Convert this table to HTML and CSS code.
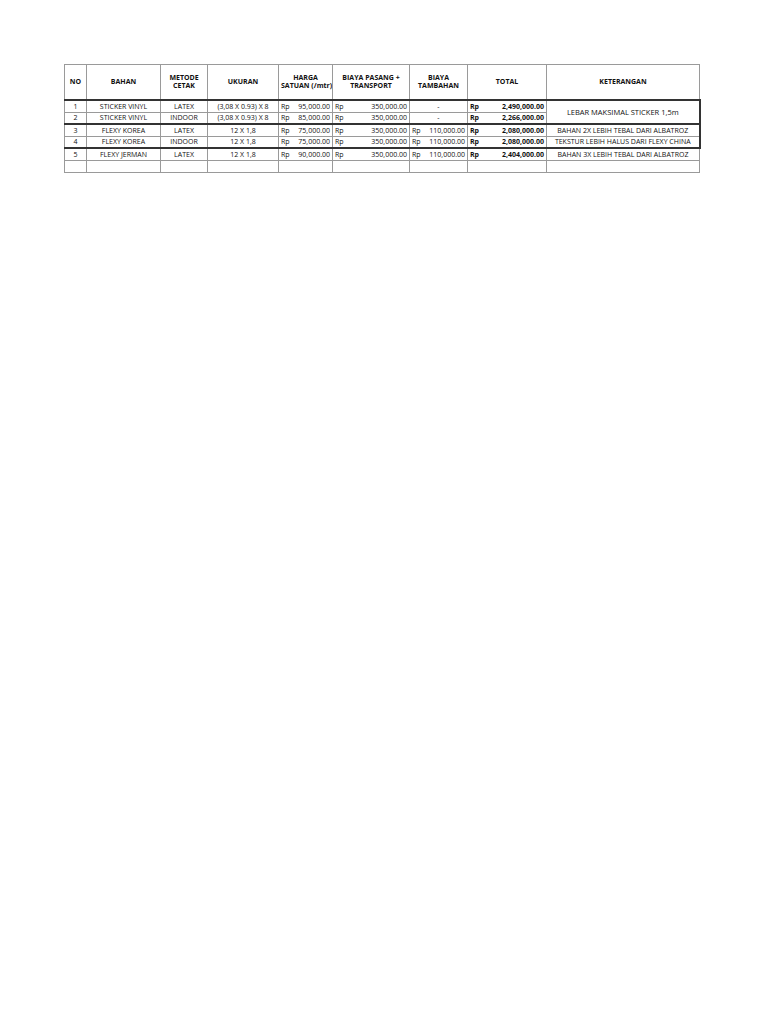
FILE: index.html
```html
<!DOCTYPE html>
<html>
<head>
<meta charset="utf-8">
<link rel="stylesheet" href="styles.css">
</head>
<body>
<table class="sheet">
  <colgroup>
    <col class="c-no"><col class="c-bahan"><col class="c-metode"><col class="c-ukuran"><col class="c-harga"><col class="c-pasang"><col class="c-tambah"><col class="c-total"><col class="c-ket">
  </colgroup>
  <thead>
    <tr class="head">
      <th>NO</th>
      <th>BAHAN</th>
      <th>METODE<br>CETAK</th>
      <th>UKURAN</th>
      <th>HARGA<br>SATUAN (/mtr)</th>
      <th>BIAYA PASANG +<br>TRANSPORT</th>
      <th>BIAYA<br>TAMBAHAN</th>
      <th>TOTAL</th>
      <th class="ket-h">KETERANGAN</th>
    </tr>
  </thead>
  <tbody>
    <tr class="row">
      <td>1</td><td>STICKER VINYL</td><td>LATEX</td><td>(3,08 X 0.93) X 8</td>
      <td><div class="acc"><span>Rp</span><span>95,000.00</span></div></td>
      <td><div class="acc"><span>Rp</span><span>350,000.00</span></div></td>
      <td>-</td>
      <td class="bold"><div class="acc"><span>Rp</span><span>2,490,000.00</span></div></td>
      <td class="ket merged" rowspan="2">LEBAR MAKSIMAL STICKER 1,5m</td>
    </tr>
    <tr class="row thick">
      <td>2</td><td>STICKER VINYL</td><td>INDOOR</td><td>(3,08 X 0.93) X 8</td>
      <td><div class="acc"><span>Rp</span><span>85,000.00</span></div></td>
      <td><div class="acc"><span>Rp</span><span>350,000.00</span></div></td>
      <td>-</td>
      <td class="bold"><div class="acc"><span>Rp</span><span>2,266,000.00</span></div></td>
    </tr>
    <tr class="row">
      <td>3</td><td>FLEXY KOREA</td><td>LATEX</td><td>12 X 1,8</td>
      <td><div class="acc"><span>Rp</span><span>75,000.00</span></div></td>
      <td><div class="acc"><span>Rp</span><span>350,000.00</span></div></td>
      <td><div class="acc"><span>Rp</span><span>110,000.00</span></div></td>
      <td class="bold"><div class="acc"><span>Rp</span><span>2,080,000.00</span></div></td>
      <td class="ket">BAHAN 2X LEBIH TEBAL DARI ALBATROZ</td>
    </tr>
    <tr class="row thick">
      <td>4</td><td>FLEXY KOREA</td><td>INDOOR</td><td>12 X 1,8</td>
      <td><div class="acc"><span>Rp</span><span>75,000.00</span></div></td>
      <td><div class="acc"><span>Rp</span><span>350,000.00</span></div></td>
      <td><div class="acc"><span>Rp</span><span>110,000.00</span></div></td>
      <td class="bold"><div class="acc"><span>Rp</span><span>2,080,000.00</span></div></td>
      <td class="ket">TEKSTUR LEBIH HALUS DARI FLEXY CHINA</td>
    </tr>
    <tr class="row">
      <td>5</td><td>FLEXY JERMAN</td><td>LATEX</td><td>12 X 1,8</td>
      <td><div class="acc"><span>Rp</span><span>90,000.00</span></div></td>
      <td><div class="acc"><span>Rp</span><span>350,000.00</span></div></td>
      <td><div class="acc"><span>Rp</span><span>110,000.00</span></div></td>
      <td class="bold"><div class="acc"><span>Rp</span><span>2,404,000.00</span></div></td>
      <td>BAHAN 3X LEBIH TEBAL DARI ALBATROZ</td>
    </tr>
    <tr class="row">
      <td></td><td></td><td></td><td></td><td></td><td></td><td></td><td></td><td></td>
    </tr>
  </tbody>
</table>
</body>
</html>
```

FILE: styles.css
```css
html, body {
  margin: 0;
  padding: 0;
  background: #ffffff;
}

.sheet {
  margin: 64px 0 0 64px;
  border-collapse: collapse;
  table-layout: fixed;
  width: 635px;
  font-family: "Open Sans", "Liberation Sans", sans-serif;
  font-size: 7px;
  color: #111;
  border: 1px solid #9a9a9a;
}

.c-no { width: 22px; }
.c-bahan { width: 74px; }
.c-metode { width: 47px; }
.c-ukuran { width: 71px; }
.c-harga { width: 54px; }
.c-pasang { width: 77px; }
.c-tambah { width: 58px; }
.c-total { width: 79px; }
.c-ket { width: 153px; }

.sheet th,
.sheet td {
  border: 1px solid #9a9a9a;
  padding: 0 2px;
  text-align: center;
  vertical-align: middle;
  white-space: nowrap;
  overflow: hidden;
  line-height: 8px;
}

.head th {
  height: 34px;
  font-weight: 700;
  font-size: 7px;
  border-bottom: 2px solid #333;
}

.row td {
  height: 11px;
}

.row.thick td {
  height: 10px;
  border-bottom: 2px solid #333;
}

.acc {
  display: flex;
  justify-content: space-between;
}

.bold {
  font-weight: 700;
}

.sheet td.ket {
  border-right: 2px solid #333;
}

.sheet td.merged {
  border-bottom: 2px solid #333;
  font-size: 7.5px;
}
```
